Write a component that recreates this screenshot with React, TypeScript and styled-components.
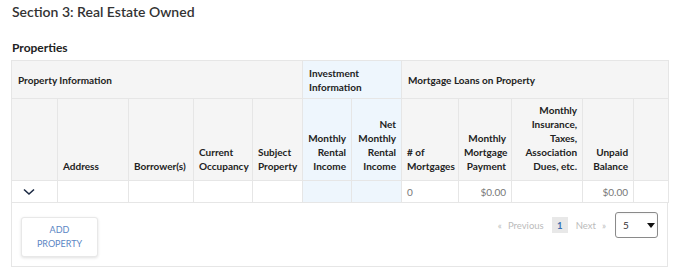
import React from "react";
import styled, { createGlobalStyle } from "styled-components";

const Global = createGlobalStyle`
  html, body { margin: 0; padding: 0; background: #fff; }
  body { font-family: "Lato", "Noto Sans", sans-serif; color: #333; }
`;

const Page = styled.div`
  padding: 2px 9px 0 11px;
  width: 657px;
`;

const Title = styled.h2`
  margin: 0 0 0 1px;
  font-size: 14px;
  font-weight: 600;
  line-height: 20px;
  color: #333;
`;

const SubTitle = styled.h3`
  margin: 18px 0 4px 1px;
  font-size: 12px;
  font-weight: 700;
  line-height: 16px;
  color: #222;
`;

const Table = styled.table`
  width: 657px;
  border-collapse: collapse;
  table-layout: fixed;
  font-size: 10px;
  border: 1px solid #e6e6e6;
`;

const GroupTh = styled.th<{ $blue?: boolean }>`
  background: ${(p) => (p.$blue ? "#eef6fd" : "#f5f5f5")};
  border: 1px solid #e6e6e6;
  text-align: left;
  font-weight: 700;
  color: #222;
  height: 37px;
  padding: 0 6px;
  line-height: 14px;
  vertical-align: middle;
`;

const ColTh = styled.th<{ $blue?: boolean; $right?: boolean }>`
  background: ${(p) => (p.$blue ? "#eef6fd" : "#f5f5f5")};
  border: 1px solid #e6e6e6;
  text-align: ${(p) => (p.$right ? "right" : "left")};
  font-weight: 700;
  color: #222;
  height: 74px;
  padding: 0 5px 7px 5px;
  line-height: 14px;
  vertical-align: bottom;
`;

const Td = styled.td<{ $blue?: boolean; $right?: boolean }>`
  background: ${(p) => (p.$blue ? "#eef6fd" : "#fff")};
  border: 1px solid #e6e6e6;
  text-align: ${(p) => (p.$right ? "right" : "left")};
  color: #777;
  height: 21px;
  padding: 0 5px;
  vertical-align: middle;
`;

const Footer = styled.div`
  border: 1px solid #e6e6e6;
  border-top: none;
  height: 63px;
  display: flex;
  justify-content: space-between;
  align-items: flex-start;
  padding: 0 9px 0 9px;
`;

const AddButton = styled.button`
  margin-top: 14px;
  width: 77px;
  height: 40px;
  background: #fff;
  border: 1px solid #e8e8e8;
  border-radius: 3px;
  box-shadow: 0 1px 3px rgba(0, 0, 0, 0.12);
  color: #5b86c4;
  font-family: inherit;
  font-size: 9px;
  line-height: 14px;
  text-transform: uppercase;
  padding: 0;
  cursor: pointer;
`;

const Right = styled.div`
  display: flex;
  align-items: center;
  margin-top: 9px;
  gap: 9px;
`;

const Pager = styled.div`
  display: flex;
  align-items: center;
  font-size: 9.5px;
  color: #bbb;
  gap: 6px;
`;

const PageNum = styled.span`
  background: #e8e8e8;
  color: #3a6fb0;
  font-weight: 700;
  width: 16px;
  height: 16px;
  display: flex;
  align-items: center;
  justify-content: center;
  margin: 0 2px;
`;

const Select = styled.div`
  width: 43px;
  height: 26px;
  border: 1px solid #8a8a8a;
  border-radius: 3px;
  display: flex;
  align-items: center;
  justify-content: space-between;
  padding: 0 2px 0 7px;
  box-sizing: border-box;
  font-size: 10px;
  color: #333;
  box-shadow: inset 0 1px 2px rgba(0,0,0,0.05);
`;

const Chevron = () => (
  <svg width="12" height="8" viewBox="0 0 12 8" style={{ display: "block", marginLeft: 6 }}>
    <path d="M1 1.5 L6 6 L11 1.5" fill="none" stroke="#1c2a44" strokeWidth="1.6" />
  </svg>
);

const Caret = () => (
  <svg width="8" height="5" viewBox="0 0 8 5" style={{ display: "block" }}>
    <path d="M0 0 H8 L4 5 Z" fill="#111" />
  </svg>
);

const widths = [46, 71, 65, 59, 50, 49, 50, 57, 53, 71, 51, 35];

export default function App() {
  return (
    <>
      <Global />
      <Page>
        <Title>Section 3: Real Estate Owned</Title>
        <SubTitle>Properties</SubTitle>
        <Table>
          <colgroup>
            {widths.map((w, i) => (
              <col key={i} style={{ width: w }} />
            ))}
          </colgroup>
          <thead>
            <tr>
              <GroupTh colSpan={5}>Property Information</GroupTh>
              <GroupTh colSpan={2} $blue>
                Investment
                <br />
                Information
              </GroupTh>
              <GroupTh colSpan={5}>Mortgage Loans on Property</GroupTh>
            </tr>
            <tr>
              <ColTh></ColTh>
              <ColTh>Address</ColTh>
              <ColTh>Borrower(s)</ColTh>
              <ColTh>
                Current
                <br />
                Occupancy
              </ColTh>
              <ColTh>
                Subject
                <br />
                Property
              </ColTh>
              <ColTh $blue $right>
                Monthly
                <br />
                Rental
                <br />
                Income
              </ColTh>
              <ColTh $blue $right>
                Net
                <br />
                Monthly
                <br />
                Rental
                <br />
                Income
              </ColTh>
              <ColTh>
                # of
                <br />
                Mortgages
              </ColTh>
              <ColTh $right>
                Monthly
                <br />
                Mortgage
                <br />
                Payment
              </ColTh>
              <ColTh $right>
                Monthly
                <br />
                Insurance,
                <br />
                Taxes,
                <br />
                Association
                <br />
                Dues, etc.
              </ColTh>
              <ColTh $right>
                Unpaid
                <br />
                Balance
              </ColTh>
              <ColTh></ColTh>
            </tr>
          </thead>
          <tbody>
            <tr>
              <Td>
                <Chevron />
              </Td>
              <Td></Td>
              <Td></Td>
              <Td></Td>
              <Td></Td>
              <Td $blue></Td>
              <Td $blue></Td>
              <Td>0</Td>
              <Td $right>$0.00</Td>
              <Td></Td>
              <Td $right>$0.00</Td>
              <Td></Td>
            </tr>
          </tbody>
        </Table>
        <Footer>
          <AddButton>
            Add
            <br />
            Property
          </AddButton>
          <Right>
            <Pager>
              <span>«</span>
              <span>Previous</span>
              <PageNum>1</PageNum>
              <span>Next</span>
              <span>»</span>
            </Pager>
            <Select>
              <span>5</span>
              <Caret />
            </Select>
          </Right>
        </Footer>
      </Page>
    </>
  );
}
